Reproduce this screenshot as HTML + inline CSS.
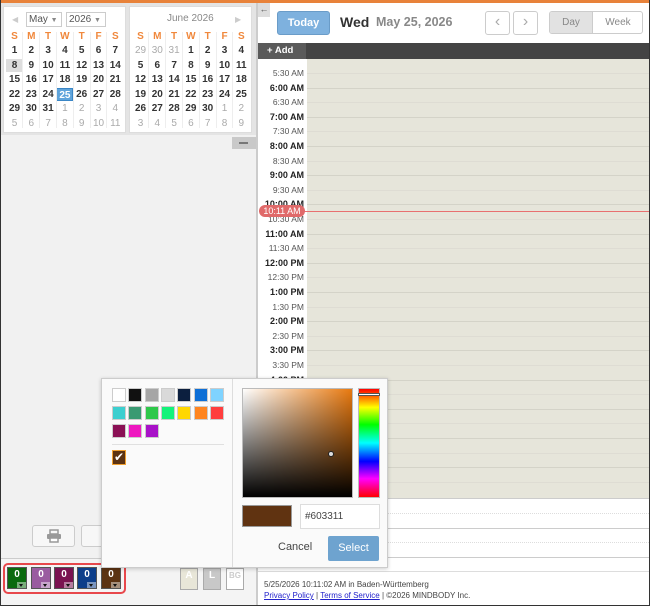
<!DOCTYPE html>
<html><head><meta charset="utf-8"><style>
*{box-sizing:border-box;margin:0;padding:0}
body{width:650px;height:606px;position:relative;overflow:hidden;font-family:"Liberation Sans",Arial,sans-serif;background:#fff}
.a{position:absolute}
.frame{left:0;top:0;width:650px;height:606px;border:1px solid #333;border-top:none;z-index:50;pointer-events:none}
.cal{position:absolute;top:6px;width:123px;height:127px;background:#fff;border:1px solid #ddd}
.d{position:absolute;width:17px;text-align:center;font-size:10px;font-weight:bold;color:#333}
.g{color:#aaa;font-weight:normal}
.h{color:#f0883c}
.t{position:absolute;left:258px;width:46px;text-align:right;font-size:8.5px;color:#555}
.t.b{font-weight:bold;color:#222;font-size:9px}
.sw{position:absolute;width:14px;height:14px;border:1px solid #ccc}
.bd{position:absolute;top:567px;width:20px;height:22px;border:1px solid #555;color:#fff;font-size:10px;font-weight:bold;text-align:center;line-height:14px}
.bd i{position:absolute;right:0;bottom:0;width:9px;height:6px;background:rgba(255,255,255,.45)}
.bd i:after{content:"";position:absolute;left:2px;top:2px;border:2.5px solid transparent;border-top:3px solid #111}
.tb{position:absolute;top:568px;width:18px;height:22px;border:1px solid #aaa;font-size:10px;color:#fff;text-align:center;line-height:14px;font-weight:bold}
</style></head><body>
<div class="a" style="left:0;top:0;width:650px;height:3px;background:#e8823a"></div>
<div class="a" style="left:0;top:3px;width:257px;height:555px;background:#f1f1f1"></div>
<div class="a" style="left:0;top:558px;width:257px;height:48px;background:#f4f4f4;border-top:1px solid #ccc"></div>
<div class="a" style="left:0;top:3px;width:257px;height:132px;background:#e4e4e4"></div>
<div class="cal" style="left:3px"></div>
<div class="cal" style="left:129px"></div>
<div class="a" style="left:232px;top:137px;width:25px;height:12px;background:#c9c9c9"></div>
<div class="a" style="left:239px;top:142px;width:9px;height:2px;background:#777"></div>
<div class="a" style="left:256px;top:3px;width:2px;height:603px;background:#ccc"></div>
<div class="a" style="left:258px;top:3px;width:12px;height:14px;background:#ddd;font-size:9px;color:#555;text-align:center;line-height:12px">&#8592;</div>
<div class="a" style="left:12px;top:15px;font-size:8px;color:#ccc">&#9664;</div>
<div class="a" style="left:235px;top:15px;font-size:8px;color:#ccc">&#9654;</div>
<div class="a" style="left:26px;top:12px;width:36px;height:15px;border:1px solid #ccc;font-size:10px;color:#555;padding:1px 2px">May <span style="font-size:7px;color:#888">&#9660;</span></div>
<div class="a" style="left:66px;top:12px;width:40px;height:15px;border:1px solid #ccc;font-size:10px;color:#555;padding:1px 2px">2026 <span style="font-size:7px;color:#888">&#9660;</span></div>
<div class="a" style="left:167px;top:13px;font-size:10px;color:#888">June 2026</div>
<div id="cals"></div>
<div class="a" style="left:32px;top:525px;width:43px;height:22px;border:1px solid #ccc;border-radius:3px;background:#f7f7f7"></div>
<svg class="a" style="left:46px;top:529px" width="16" height="14" viewBox="0 0 16 14"><rect x="4" y="1" width="8" height="4" fill="none" stroke="#999" stroke-width="1.5"/><rect x="1" y="5" width="14" height="5" rx="1" fill="#999"/><rect x="4" y="9" width="8" height="4" fill="#fff" stroke="#999" stroke-width="1.5"/></svg>
<div class="a" style="left:81px;top:525px;width:30px;height:22px;border:1px solid #ccc;border-radius:3px;background:#f7f7f7"></div>
<div class="a" style="left:3px;top:563px;width:123px;height:31px;border:2px solid #e8484c;border-radius:5px"></div>
<div class="bd" style="left:7px;background:#0a6a0e">0<i></i></div>
<div class="bd" style="left:31px;background:#9a5ca0">0<i></i></div>
<div class="bd" style="left:54px;background:#7a1250">0<i></i></div>
<div class="bd" style="left:77px;background:#0d3e8a">0<i></i></div>
<div class="bd" style="left:101px;background:#5c3312">0<i></i></div>
<div class="tb" style="left:180px;background:#e8e6d8">A</div>
<div class="tb" style="left:203px;background:#c8c8c8">L</div>
<div class="tb" style="left:226px;background:#fff;color:#ccc;font-size:8px">BG</div>
<div class="a" style="left:277px;top:11px;width:53px;height:24px;background:#7eb1de;border:1px solid #6a9cc8;border-radius:3px;color:#fff;font-size:11px;font-weight:bold;text-align:center;line-height:22px">Today</div>
<div class="a" style="left:340px;top:14px;font-size:14px;font-weight:bold;color:#333">Wed</div>
<div class="a" style="left:376px;top:15px;font-size:12.5px;font-weight:bold;color:#888">May 25, 2026</div>
<div class="a" style="left:485px;top:11px;width:25px;height:24px;border:1px solid #ccc;border-radius:3px;color:#aaa;font-size:16px;text-align:center;line-height:20px">&#8249;</div>
<div class="a" style="left:513px;top:11px;width:25px;height:24px;border:1px solid #ccc;border-radius:3px;color:#aaa;font-size:16px;text-align:center;line-height:20px">&#8250;</div>
<div class="a" style="left:549px;top:11px;width:94px;height:23px;border:1px solid #ccc;border-radius:3px;overflow:hidden;font-size:10px;color:#888">
<div class="a" style="left:0;top:0;width:43px;height:21px;background:#e2e2e2;border-right:1px solid #ccc;text-align:center;line-height:21px">Day</div>
<div class="a" style="left:43px;top:0;width:50px;height:21px;text-align:center;line-height:21px">Week</div></div>
<div class="a" style="left:258px;top:43px;width:391px;height:16px;background:#444"></div>
<div class="a" style="left:258px;top:43px;width:48px;height:16px;background:#5a5a5a;color:#fff;font-size:9.5px;font-weight:bold;line-height:16px;padding-left:9px">+ Add</div>
<div class="a" style="left:307px;top:59px;width:342px;height:439px;background:#e6e5da"></div>
<div id="grid"></div>
<div class="a" style="left:307px;top:498px;width:342px;height:1px;background:#ccc"></div>
<div class="a" style="left:307px;top:513px;width:342px;border-top:1px dotted #ddd"></div>
<div class="a" style="left:307px;top:528px;width:342px;height:1px;background:#ccc"></div>
<div class="a" style="left:307px;top:542px;width:342px;border-top:1px dotted #ddd"></div>
<div class="a" style="left:307px;top:557px;width:342px;height:1px;background:#ccc"></div>
<div class="a" style="left:258px;top:571px;width:391px;height:1px;background:#ddd"></div>
<div class="a" style="left:264px;top:579px;font-size:8px;color:#444;line-height:11px">5/25/2026 10:11:02 AM in Baden-Württemberg<br><span style="color:#22c;text-decoration:underline">Privacy Policy</span> | <span style="color:#22c;text-decoration:underline">Terms of Service</span> | ©2026 MINDBODY Inc.</div>
<div class="a" style="left:259px;top:211px;width:390px;height:1px;background:#e87070"></div>
<div class="a" style="left:259px;top:205px;width:46px;height:12px;border-radius:6px;background:#e06a6a;color:#fff;font-size:9px;text-align:center;line-height:12px">10:11 AM</div>
<div class="a" style="left:101px;top:378px;width:287px;height:190px;background:#fafafa;border:1px solid #ccc;box-shadow:0 1px 4px rgba(0,0,0,.2);z-index:10">
<div class="a" style="left:130px;top:0;width:1px;height:188px;background:#ddd"></div>
<div class="a" style="left:10px;top:65px;width:112px;height:1px;background:#e0e0e0"></div>
<div class="a" style="left:10px;top:71px;width:14px;height:15px;background:#5c3312;border:1px solid #f0a030;color:#fff;font-size:12px;line-height:13px;text-align:center">&#10004;</div>
<div class="a" style="left:140px;top:9px;width:111px;height:110px;background:linear-gradient(to top,#000,transparent),linear-gradient(to right,#fff,#e8790f);border:1px solid #bbb"></div>
<div class="a" style="left:226px;top:72px;width:6px;height:6px;border-radius:50%;border:1px solid #222;background:#ddd"></div>
<div class="a" style="left:256px;top:9px;width:22px;height:110px;background:linear-gradient(to bottom,#f00,#ff0 17%,#0f0 33%,#0ff 50%,#00f 67%,#f0f 83%,#f00);border:1px solid #bbb"></div>
<div class="a" style="left:256px;top:14px;width:22px;height:3px;border:1px solid #555;background:#fff"></div>
<div class="a" style="left:140px;top:126px;width:50px;height:22px;background:#603311;border:1px solid #999"></div>
<div class="a" style="left:198px;top:125px;width:80px;height:25px;background:#fff;border:1px solid #ddd;font-size:10px;color:#444;padding:6px 4px">#603311</div>
<div class="a" style="left:176px;top:162px;font-size:11px;color:#444">Cancel</div>
<div class="a" style="left:226px;top:157px;width:51px;height:25px;background:#6ea3cf;border-radius:2px;color:#fff;font-size:11px;text-align:center;line-height:25px">Select</div>
<div id="sw"></div>
</div>
<div class="frame a"></div>
<script>
var h='';
function cal(x0,rows){
 var hd=['S','M','T','W','T','F','S'];
 for(var c=0;c<7;c++)h+='<div class="d h" style="left:'+(x0+c*16.8-8)+'px;top:31px">'+hd[c]+'</div>';
 rows.forEach(function(r,i){r.forEach(function(v,c){var cls=v[1]?' g':'';var st='';
  if(v[2]==1)st='background:#ddd;';if(v[2]==2)st='background:#5fa4db;color:#fff;border:1px solid #3a86c6;';
  h+='<div class="d'+cls+'" style="'+st+'left:'+(x0+c*16.8-8)+'px;top:'+(44+i*14.6)+'px;height:13px;line-height:13px">'+v[0]+'</div>';});});
 for(var c=1;c<7;c++)h+='<div class="a" style="left:'+(x0+c*16.8-8.4)+'px;top:32px;width:1px;height:96px;background:#eee"></div>';
}
function R(a,g){return a.map(function(v,i){return [v,g&&g[i]]})}
var may=[R([1,2,3,4,5,6,7]),R([8,9,10,11,12,13,14]),R([15,16,17,18,19,20,21]),R([22,23,24,25,26,27,28]),R([29,30,31,1,2,3,4],[0,0,0,1,1,1,1]),R([5,6,7,8,9,10,11],[1,1,1,1,1,1,1])];
may[1][0][2]=1;may[3][3][2]=2;
var jun=[R([29,30,31,1,2,3,4],[1,1,1]),R([5,6,7,8,9,10,11]),R([12,13,14,15,16,17,18]),R([19,20,21,22,23,24,25]),R([26,27,28,29,30,1,2],[0,0,0,0,0,1,1]),R([3,4,5,6,7,8,9],[1,1,1,1,1,1,1])];
cal(14,may);cal(140,jun);
document.getElementById('cals').innerHTML=h;
var g='';
var labels=[];for(var hr=5;hr<=19;hr++){for(var m=0;m<2;m++){if(hr==5&&m==0)continue;var hh=hr>12?hr-12:hr;var ap=hr>=12?'PM':'AM';labels.push([hh+':'+(m?'30':'00')+' '+ap,m==0]);}}
labels.forEach(function(l,i){var y=73+i*14.6;if(y>495)return;
 g+='<div class="t'+(l[1]?' b':'')+'" style="top:'+(y-5)+'px">'+l[0]+'</div>';
 g+='<div class="a" style="left:307px;top:'+Math.round(y)+'px;width:342px;height:1px;background:'+(l[1]?'#d4d3c8':'#dedcd3')+'"></div>';});
document.getElementById('grid').innerHTML=g;
var cols=[['#fff','#111','#a6a6a6','#d9d9d9','#0c1f3f','#0e6fd6','#7fd3ff'],['#3ccfcf','#3a9a72','#2ec84a','#14f37a','#ffd700','#ff8520','#ff3e3e'],['#8a1155','#ee18c0','#a812c8']];
var s='';cols.forEach(function(r,i){r.forEach(function(c,j){s+='<div class="sw" style="left:'+(10+j*16.3)+'px;top:'+(9+i*18)+'px;background:'+c+'"></div>';});});
document.getElementById('sw').innerHTML=s;
</script>
</body></html>
